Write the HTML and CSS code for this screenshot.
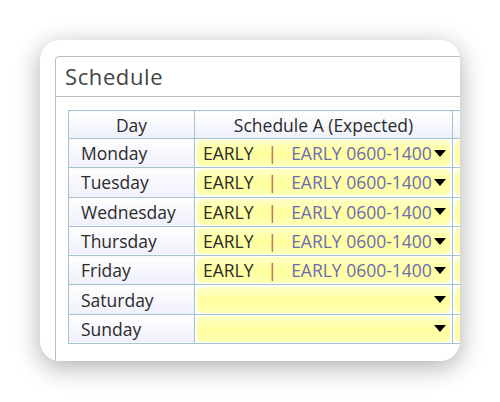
FILE: index.html
```html
<!DOCTYPE html>
<html>
<head>
<meta charset="utf-8">
<link rel="stylesheet" href="styles.css">
</head>
<body>
<div class="stage">
  <div class="card">
    <div class="panel">
      <div class="panel-head">Schedule</div>
      <div class="panel-body">
        <table class="grid">
          <colgroup><col class="c-day"><col class="c-sched"><col class="c-sched"></colgroup>
          <thead>
            <tr><th>Day</th><th>Schedule A (Expected)</th><th></th></tr>
          </thead>
          <tbody>
            <tr><td class="day">Monday</td><td class="sched"><div class="pick"><span class="code">EARLY</span><span class="sep">|</span><span class="name">EARLY 0600-1400</span><span class="caret"></span></div></td><td class="sched"><div class="pick"></div></td></tr>
            <tr><td class="day">Tuesday</td><td class="sched"><div class="pick"><span class="code">EARLY</span><span class="sep">|</span><span class="name">EARLY 0600-1400</span><span class="caret"></span></div></td><td class="sched"><div class="pick"></div></td></tr>
            <tr><td class="day">Wednesday</td><td class="sched"><div class="pick"><span class="code">EARLY</span><span class="sep">|</span><span class="name">EARLY 0600-1400</span><span class="caret"></span></div></td><td class="sched"><div class="pick"></div></td></tr>
            <tr><td class="day">Thursday</td><td class="sched"><div class="pick"><span class="code">EARLY</span><span class="sep">|</span><span class="name">EARLY 0600-1400</span><span class="caret"></span></div></td><td class="sched"><div class="pick"></div></td></tr>
            <tr><td class="day">Friday</td><td class="sched"><div class="pick"><span class="code">EARLY</span><span class="sep">|</span><span class="name">EARLY 0600-1400</span><span class="caret"></span></div></td><td class="sched"><div class="pick"></div></td></tr>
            <tr><td class="day">Saturday</td><td class="sched"><div class="pick"><span class="caret"></span></div></td><td class="sched"><div class="pick"></div></td></tr>
            <tr><td class="day">Sunday</td><td class="sched"><div class="pick"><span class="caret"></span></div></td><td class="sched"><div class="pick"></div></td></tr>
          </tbody>
        </table>
      </div>
    </div>
  </div>
</div>
</body>
</html>
```
FILE: styles.css
```css
html, body {
  margin: 0;
  padding: 0;
  background: #ffffff;
}
body {
  font-family: "Open Sans", "Noto Sans", sans-serif;
  color: #2b2b2b;
}
.stage {
  padding: 40px;
  width: 420px;
}
.card {
  width: 420px;
  height: 321px;
  background: #fff;
  border-radius: 20px;
  box-shadow: 0 6px 26px rgba(0, 0, 0, 0.32);
  overflow: hidden;
  padding: 16px 0 0 15px;
  box-sizing: border-box;
}
.panel {
  width: 640px;
  height: 400px;
  border: 1px solid #bcbcbc;
  border-radius: 4px 4px 0 0;
  box-sizing: border-box;
}
.panel-head {
  height: 39px;
  border-bottom: 1px solid #bcbcbc;
  padding-left: 9px;
  font-size: 22px;
  line-height: 38px;
  color: #444;
  letter-spacing: 0.6px;
}
.panel-body {
  padding: 13px 12px;
}
.grid {
  border-collapse: collapse;
  table-layout: fixed;
  width: 643px;
  font-size: 17.5px;
}
.c-day { width: 126px; }
.c-sched { width: 258px; }
.grid th,
.grid td {
  border: 1px solid #a3c5ca;
  padding: 0;
}
.grid th {
  height: 27px;
  font-weight: normal;
  background: linear-gradient(#ffffff, #eef0fb);
  text-align: center;
  color: #2b2b2b;
  line-height: 26px;
}
.grid td {
  height: 26.3px;
  line-height: 24px;
}
.day {
  background: linear-gradient(#ffffff, #eff0fb);
  padding-left: 12px !important;
}
.sched {
  padding: 1px 2px !important;
}
.pick {
  display: flex;
  align-items: center;
  height: 26px;
  border-radius: 5px;
  background: linear-gradient(#ffffc8, #ffff9e 50%, #ffffb4);
  padding: 0 4px 0 6px;
}
.code { color: #2b2b2b; }
.sep {
  color: #b5643a;
  margin-left: 14px;
}
.name {
  color: #6b6bb6;
  margin-left: 14px;
}
.caret {
  margin-left: auto;
  width: 0;
  height: 0;
  border-left: 6px solid transparent;
  border-right: 6px solid transparent;
  border-top: 7px solid #000;
}
```
